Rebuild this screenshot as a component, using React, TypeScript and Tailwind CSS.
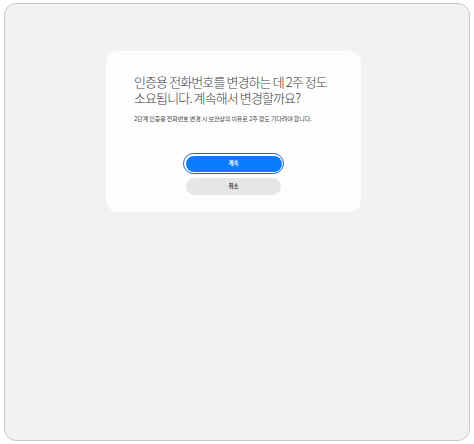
import * as React from 'react';

const font = {fontFamily: '"Noto Sans CJK KR", "Noto Sans", sans-serif'};

export default function App() {
  return (
    <div className="w-[474px] h-[444px] px-[4px] py-[3px] bg-white" style={font}>
      <div className="h-full w-full rounded-[12px] border border-[#c8c8c8] bg-[#f2f2f2] flex flex-col items-center pt-[47px] pr-[7px]">
        <div className="w-[255px] h-[161px] rounded-[12px] bg-[#fdfdfd] pl-[28px] pr-[20px] pt-[23px] flex flex-col">
          <h1 className="flex flex-col whitespace-nowrap text-[13px] tracking-[-0.9px] text-[#3f3f3f] font-light">
            <span className="block h-[16px] leading-[16px]">인증용 전화번호를 변경하는 데 2주 정도</span>
            <span className="block h-[16px] leading-[16px]">소요됩니다. 계속해서 변경할까요?</span>
          </h1>
          <p className="mt-[9px] whitespace-nowrap text-[6px] leading-[8px] text-[#444] tracking-[-0.1px]">
            2단계 인증용 전화번호 변경 시 보안상의 이유로 2주 정도 기다려야 합니다.
          </p>
          <div className="mt-[30px] flex flex-col items-center gap-[4px] pr-[8px]">
            <button className="w-[101px] h-[21px] rounded-full border-[1.5px] border-[#1b5fd6] p-[1.5px] bg-white">
              <span className="flex h-full w-full items-center justify-center rounded-full bg-[#0a7cff] text-[5.5px] font-bold text-white">
                계속
              </span>
            </button>
            <button className="w-[95px] h-[17px] rounded-full bg-[#e6e6e6] text-[5.5px] font-bold text-[#333] flex items-center justify-center">
              취소
            </button>
          </div>
        </div>
      </div>
    </div>
  );
}
